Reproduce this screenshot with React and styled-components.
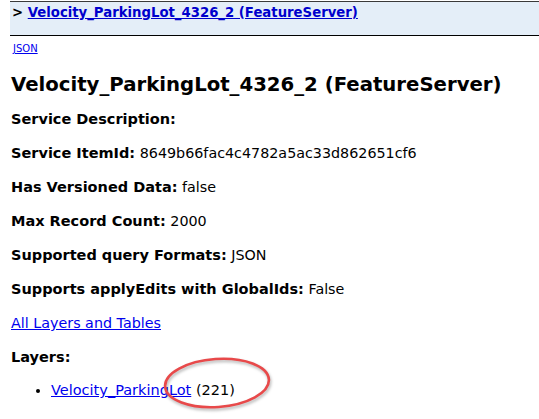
import React from 'react'
import styled, { createGlobalStyle } from 'styled-components'

const GlobalStyle = createGlobalStyle`
  html, body {
    margin: 0;
    padding: 0;
    background: #fff;
  }
  body {
    font-family: Verdana, "DejaVu Sans", sans-serif;
    color: #000;
  }
`

const info = [
  { label: 'Service Description:', value: '' },
  { label: 'Service ItemId:', value: '8649b66fac4c4782a5ac33d862651cf6' },
  { label: 'Has Versioned Data:', value: 'false' },
  { label: 'Max Record Count:', value: '2000' },
  { label: 'Supported query Formats:', value: 'JSON' },
  { label: 'Supports applyEdits with GlobalIds:', value: 'False' },
]

function App() {
  return (
    <Page>
      <GlobalStyle />
      <Breadcrumbs>
        &gt; <a href="#">Velocity_ParkingLot_4326_2 (FeatureServer)</a>
      </Breadcrumbs>
      <Content>
        <JsonLink href="#">JSON</JsonLink>
        <Title>Velocity_ParkingLot_4326_2 (FeatureServer)</Title>
        {info.map((row) => (
          <Row key={row.label}>
            <Label>{row.label}</Label> {row.value}
          </Row>
        ))}
        <Row>
          <a href="#">All Layers and Tables</a>
        </Row>
        <Row>
          <Label>Layers:</Label>
        </Row>
        <LayerList>
          <li>
            <a href="#">Velocity_ParkingLot</a> (221)
          </li>
        </LayerList>
      </Content>
      <Mark viewBox="0 0 120 64">
        <ellipse cx="60" cy="32" rx="52" ry="24" transform="rotate(-4 60 32)" />
      </Mark>
    </Page>
  )
}

export default App

const Page = styled.div`
  position: relative;
  width: 539px;
  height: 419px;
  overflow: hidden;

  a {
    color: #0000ee;
    text-decoration: underline;
  }
`

const Breadcrumbs = styled.div`
  margin: 1px 0 0 10px;
  height: 35px;
  padding: 3px 0 0 2px;
  box-sizing: border-box;
  background: #e4eef8;
  border-top: 1px solid #3a3a3a;
  border-bottom: 1px solid #000;
  font-size: 13.25px;
  font-weight: bold;

  a {
    color: #0000cc;
  }
`

const Content = styled.div`
  padding: 0 11px;
`

const JsonLink = styled.a`
  display: block;
  margin: 7px 0 0 2px;
  font-size: 10px;
  line-height: 11px;
`

const Title = styled.h2`
  margin: 19px 0 0;
  font-size: 19.7px;
  font-weight: bold;
  line-height: 24px;
`

const Row = styled.div`
  font-size: 14.3px;
  line-height: 18px;
  margin-top: 16px;

  &:nth-of-type(1) {
    margin-top: 13px;
  }
`

const Label = styled.b`
  font-size: 14.5px;
`

const LayerList = styled.ul`
  margin: 15px 0 0;
  padding-left: 40px;
  font-size: 14.5px;
  line-height: 18px;
`

const Mark = styled.svg`
  position: absolute;
  left: 157px;
  top: 351px;
  width: 120px;
  height: 64px;
  overflow: visible;
  filter: drop-shadow(1px 2px 1.5px rgba(0, 0, 0, 0.3));

  ellipse {
    fill: none;
    stroke: #e8494a;
    stroke-width: 2.6;
  }
`
